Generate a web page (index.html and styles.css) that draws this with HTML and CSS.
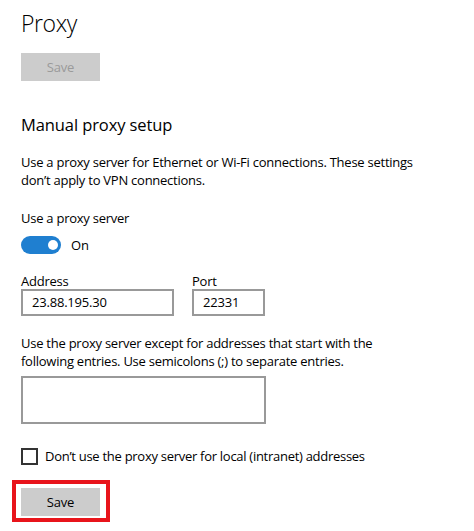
FILE: index.html
```html
<!DOCTYPE html>
<html lang="en">
<head>
<meta charset="utf-8">
<title>Proxy</title>
<link rel="stylesheet" href="styles.css">
</head>
<body>
<main class="page">
  <h1 class="title">Proxy</h1>
  <button class="btn btn-disabled" disabled>Save</button>

  <h2 class="heading">Manual proxy setup</h2>
  <p class="desc">Use a proxy server for Ethernet or Wi-Fi connections. These settings<br>don’t apply to VPN connections.</p>

  <div class="label label-toggle">Use a proxy server</div>
  <div class="toggle-row">
    <span class="toggle"><span class="knob"></span></span>
    <span class="toggle-text">On</span>
  </div>

  <div class="fields">
    <div class="field">
      <div class="label">Address</div>
      <div class="input input-address">23.88.195.30</div>
    </div>
    <div class="field">
      <div class="label">Port</div>
      <div class="input input-port">22331</div>
    </div>
  </div>

  <p class="desc desc-except">Use the proxy server except for addresses that start with the<br>following entries. Use semicolons (;) to separate entries.</p>
  <div class="textarea"></div>

  <div class="check-row">
    <span class="checkbox"></span>
    <span class="check-text">Don’t use the proxy server for local (intranet) addresses</span>
  </div>

  <div class="highlight">
    <button class="btn btn-save">Save</button>
  </div>
</main>
</body>
</html>
```

FILE: styles.css
```css
html, body {
  margin: 0;
  padding: 0;
  background: #ffffff;
}

body {
  font-family: "Open Sans", "Noto Sans", "Liberation Sans", sans-serif;
  color: #000000;
  font-size: 13px;
}

.page {
  display: flex;
  flex-direction: column;
  align-items: flex-start;
  padding: 0 0 0 21px;
  width: 440px;
}

.title {
  margin: 7px 0 0 0;
  font-size: 23px;
  font-weight: 300;
  line-height: 32px;
  letter-spacing: -0.4px;
}

.btn {
  width: 79px;
  height: 28px;
  border: none;
  background: #cccccc;
  font-family: inherit;
  font-size: 13px;
  letter-spacing: -0.2px;
  padding: 0;
}

.btn-disabled {
  margin-top: 14px;
  color: #9a9a9a;
}

.heading {
  margin: 33px 0 0 0;
  font-size: 16.5px;
  font-weight: 400;
  line-height: 22px;
  letter-spacing: -0.1px;
}

.desc {
  margin: 17px 0 0 0;
  line-height: 18px;
  letter-spacing: -0.25px;
  white-space: nowrap;
}

.label {
  line-height: 16px;
  letter-spacing: -0.25px;
}

.label-toggle {
  margin-top: 21px;
}

.toggle-row {
  display: flex;
  align-items: center;
  gap: 10px;
  margin-top: 10px;
}

.toggle {
  display: flex;
  align-items: center;
  justify-content: flex-end;
  box-sizing: border-box;
  width: 40px;
  height: 18px;
  border-radius: 9px;
  background: #1f7fd0;
  padding-right: 3px;
}

.knob {
  width: 10px;
  height: 10px;
  border-radius: 50%;
  background: #ffffff;
}

.toggle-text {
  line-height: 18px;
}

.fields {
  display: flex;
  gap: 18px;
  margin-top: 19px;
}

.field {
  display: flex;
  flex-direction: column;
}

.input {
  box-sizing: border-box;
  height: 27px;
  border: 2px solid #999999;
  padding-left: 9px;
  line-height: 23px;
  letter-spacing: -0.2px;
}

.input-address {
  width: 153px;
}

.input-port {
  width: 73px;
}

.desc-except {
  margin-top: 18px;
}

.textarea {
  box-sizing: border-box;
  width: 245px;
  height: 48px;
  margin-top: 6px;
  border: 2px solid #999999;
}

.check-row {
  display: flex;
  align-items: center;
  gap: 7px;
  margin-top: 23px;
}

.checkbox {
  box-sizing: border-box;
  width: 17px;
  height: 17px;
  border: 2px solid #333333;
}

.check-text {
  line-height: 18px;
  letter-spacing: -0.28px;
}

.highlight {
  margin: 15px 0 0 -9px;
  padding: 4px 6px 2px 5px;
  border: 4px solid #e8141b;
}

.btn-save {
  display: block;
  color: #000000;
}
```
